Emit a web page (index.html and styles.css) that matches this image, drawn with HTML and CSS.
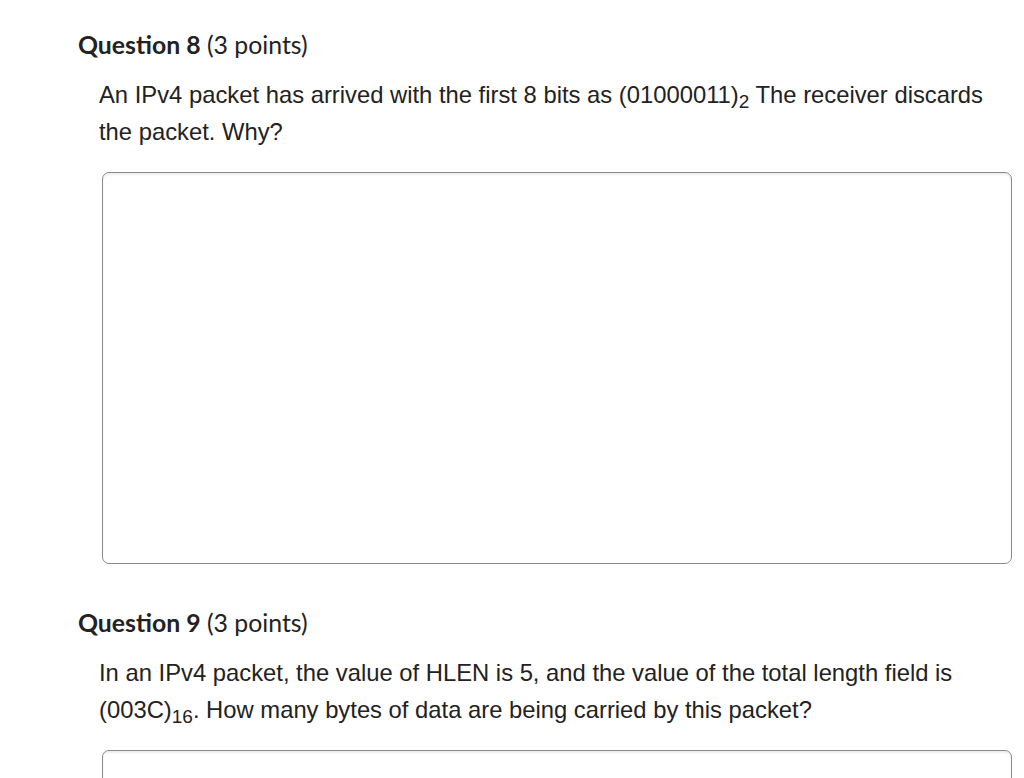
FILE: index.html
```html
<!DOCTYPE html>
<html>
<head>
<meta charset="utf-8">
<link rel="stylesheet" href="styles.css">
</head>
<body>
<div class="page">
  <section class="question">
    <h2 class="q-title"><span class="q-num">Question 8</span> (3 points)</h2>
    <div class="q-body">
      <p class="q-text">An IPv4 packet has arrived with the first 8 bits as (01000011)<sub>2</sub> The receiver discards the packet. Why?</p>
      <div class="answer answer-tall"></div>
    </div>
  </section>
  <section class="question">
    <h2 class="q-title"><span class="q-num">Question 9</span> (3 points)</h2>
    <div class="q-body">
      <p class="q-text">In an IPv4 packet, the value of HLEN is 5, and the value of the total length field is (003C)<sub>16</sub>. How many bytes of data are being carried by this packet?</p>
      <div class="answer answer-tall"></div>
    </div>
  </section>
</div>
</body>
</html>
```
FILE: styles.css
```css
html, body {
  margin: 0;
  padding: 0;
  background: #ffffff;
}
.page {
  padding: 29px 12px 0 78px;
  display: flex;
  flex-direction: column;
  gap: 43px;
}
.q-title {
  margin: 0;
  font-family: Lato, "Open Sans", sans-serif;
  font-size: 24.8px;
  font-weight: 400;
  color: #222;
  line-height: 32px;
}
.q-num {
  font-weight: 700;
}
.q-body {
  padding-left: 21px;
  margin-top: 16px;
}
.q-text {
  margin: 0;
  font-family: "Liberation Sans", Arial, Helvetica, sans-serif;
  font-size: 23.8px;
  line-height: 36.5px;
  color: #222;
  padding-right: 4px;
}
.q-text sub {
  font-size: 19px;
  line-height: 0;
  vertical-align: -5px;
}
.answer {
  margin-top: 22px;
  margin-left: 3px;
  border: 1.5px solid #8a8a8a;
  border-radius: 7px;
  box-shadow: inset 0 2px 2px rgba(0,0,0,0.07);
  background: #fff;
}
.answer-tall {
  height: 390px;
}
```
